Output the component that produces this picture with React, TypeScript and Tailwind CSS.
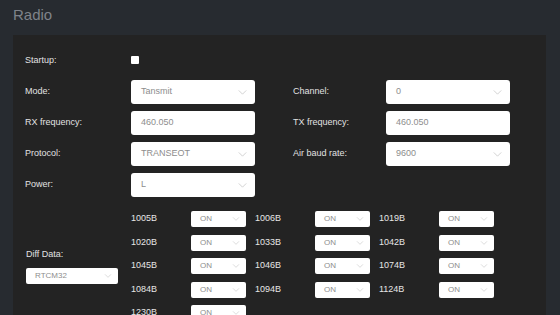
import React from "react";

const Chevron = ({ className = "" }: { className?: string }) => (
  <svg viewBox="0 0 10 6" className={className} fill="none" stroke="#c4c4c4" strokeWidth="0.9">
    <path d="M0.5 0.5 L5 5 L9.5 0.5" />
  </svg>
);

const Select = ({ value, w = "w-[124px]" }: { value: string; w?: string }) => (
  <div className={`${w} h-[24px] bg-white rounded-[3px] flex items-center justify-between pl-[10px] pr-[8px]`}>
    <span className="text-[9px] text-[#8d8d8d]">{value}</span>
    <Chevron className="w-[9px] h-[5px]" />
  </div>
);

const Input = ({ value }: { value: string }) => (
  <div className="w-[124px] h-[24px] bg-white rounded-[3px] flex items-center pl-[10px]">
    <span className="text-[9px] text-[#8d8d8d]">{value}</span>
  </div>
);

const SmallSelect = ({ value, w }: { value: string; w: string }) => (
  <div className={`${w} h-[16px] bg-white rounded-[2px] flex items-center justify-between pl-[9px] pr-[6px]`}>
    <span className="text-[8px] text-[#8d8d8d]">{value}</span>
    <Chevron className="w-[8px] h-[4px]" />
  </div>
);

const Label = ({ children, w = "w-[106px]" }: { children: React.ReactNode; w?: string }) => (
  <div className={`${w} text-[9px] text-[#e2e2e2]`}>{children}</div>
);

const rows = [
  ["1005B", "1006B", "1019B"],
  ["1020B", "1033B", "1042B"],
  ["1045B", "1046B", "1074B"],
  ["1084B", "1094B", "1124B"],
  ["1230B"],
];

export default function App() {
  return (
    <div className="w-[560px] h-[315px] overflow-hidden bg-[#272b30] font-[Liberation_Sans,Arial,sans-serif]">
      <div className="h-[35px] pl-[13px] flex items-center">
        <span className="text-[15px] text-[#7f838a] leading-none -mt-[6px]">Radio</span>
      </div>
      <div className="ml-[13px] w-[533px] h-[300px] bg-[#232323] pl-[12px] pt-[14px] flex flex-col gap-[7px]">
        <div className="h-[24px] flex items-center">
          <Label>Startup:</Label>
          <div className="w-[8px] h-[8px] bg-white rounded-[1px] -mt-[2px]" />
        </div>
        <div className="h-[24px] flex items-center">
          <Label>Mode:</Label>
          <Select value="Tansmit" />
          <div className="w-[38px]" />
          <Label w="w-[93px]">Channel:</Label>
          <Select value="0" />
        </div>
        <div className="h-[24px] flex items-center">
          <Label>RX frequency:</Label>
          <Input value="460.050" />
          <div className="w-[38px]" />
          <Label w="w-[93px]">TX frequency:</Label>
          <Input value="460.050" />
        </div>
        <div className="h-[24px] flex items-center">
          <Label>Protocol:</Label>
          <Select value="TRANSEOT" />
          <div className="w-[38px]" />
          <Label w="w-[93px]">Air baud rate:</Label>
          <Select value="9600" />
        </div>
        <div className="h-[24px] flex items-center">
          <Label>Power:</Label>
          <Select value="L" />
        </div>
        <div className="flex items-center mt-[7px]">
          <div className="w-[106px] pl-px flex flex-col gap-[7px]">
            <div className="text-[9px] text-[#e2e2e2]">Diff Data:</div>
            <SmallSelect value="RTCM32" w="w-[92px]" />
          </div>
          <div className="flex flex-col gap-[7.5px]">
            {rows.map((r, i) => (
              <div key={i} className="flex items-center gap-[9px] h-[16px]">
                {r.map((l) => (
                  <div key={l} className="flex items-center">
                    <div className="w-[60px] text-[9px] text-[#e6e6e6]">{l}</div>
                    <SmallSelect value="ON" w="w-[55px]" />
                  </div>
                ))}
              </div>
            ))}
          </div>
        </div>
      </div>
    </div>
  );
}
